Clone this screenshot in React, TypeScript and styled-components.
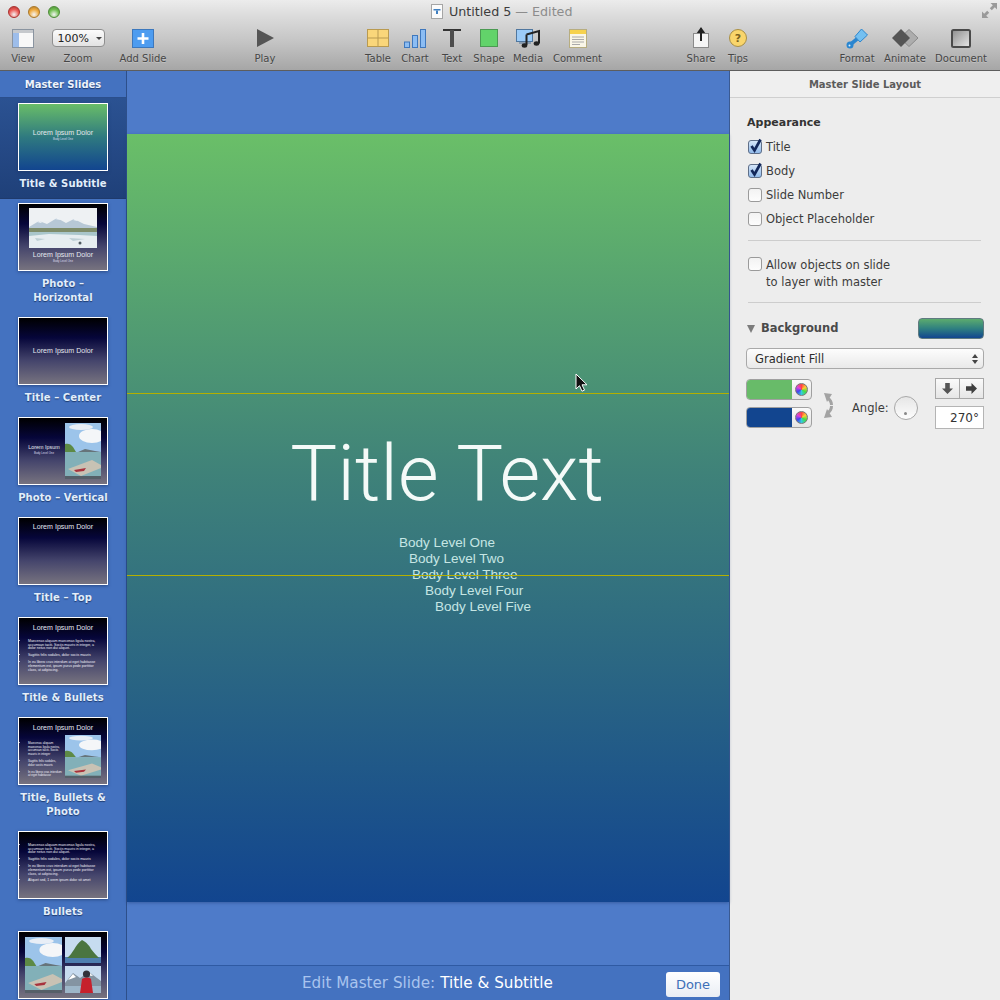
import React from "react";
import styled, { createGlobalStyle } from "styled-components";

const Global = createGlobalStyle`
  html, body { margin: 0; padding: 0; background: #ededed; }
  * { box-sizing: border-box; }
`;

const Root = styled.div`
  position: relative;
  width: 1000px;
  height: 1000px;
  overflow: hidden;
  display: flex;
  flex-direction: column;
  font-family: "DejaVu Sans", "Liberation Sans", sans-serif;
`;

/* ---------- toolbar ---------- */
const Toolbar = styled.header`
  position: relative;
  height: 71px;
  flex: none;
  background: linear-gradient(#ececec 0%, #dcdcdc 22%, #c4c4c4 60%, #a6a6a6 100%);
  border-bottom: 1px solid #5d5d5d;
`;
const TitleBar = styled.div`
  height: 23px;
  display: flex;
  align-items: center;
  position: relative;
`;
const Lights = styled.div`
  display: flex;
  gap: 8px;
  padding-left: 8px;
  align-items: center;
`;
const Light = styled.span<{ $c: string; $d: string }>`
  width: 12px;
  height: 12px;
  border-radius: 50%;
  border: 1px solid ${(p) => p.$d};
  background: radial-gradient(circle at 50% 75%, #ffffffb0 0%, ${(p) => p.$c} 55%, ${(p) => p.$d} 100%);
`;
const WinTitle = styled.div`
  position: absolute;
  left: 431px;
  top: 3px;
  display: flex;
  align-items: center;
  gap: 6px;
  font-size: 12.7px;
  color: #3c3c3c;
  line-height: 17px;
`;
const Edited = styled.span`
  color: #8c8c8c;
`;
const FullScreen = styled.div`
  position: absolute;
  right: 3px;
  top: 3px;
  display: flex;
`;
const ToolRow = styled.div`
  display: flex;
  align-items: flex-start;
  height: 47px;
`;
const ToolGroup = styled.div<{ $ml?: number }>`
  display: flex;
  margin-left: ${(p) => p.$ml ?? 0}px;
`;
const Tool = styled.div<{ $w: number }>`
  width: ${(p) => p.$w}px;
  display: flex;
  flex-direction: column;
  align-items: center;
`;
const IconSlot = styled.div<{ $pt?: number }>`
  height: 26px;
  padding-top: ${(p) => p.$pt ?? 6}px;
  display: flex;
  align-items: flex-start;
  justify-content: center;
`;
const ToolLabel = styled.div`
  font-size: 10px;
  line-height: 13px;
  margin-top: 3px;
  color: #464646;
  white-space: nowrap;
  text-shadow: 0 1px 0 #ffffff40;
`;
const ZoomButton = styled.div`
  width: 53px;
  height: 18px;
  border: 1px solid #8f8f8f;
  border-radius: 4px;
  background: linear-gradient(#fbfbfb, #e2e2e2);
  display: flex;
  align-items: center;
  padding-left: 5px;
  gap: 7px;
  font-size: 11px;
  color: #222;
`;
const Caret = styled.span`
  width: 0;
  height: 0;
  border-left: 3px solid transparent;
  border-right: 3px solid transparent;
  border-top: 3px solid #444;
`;

/* ---------- main ---------- */
const Main = styled.div`
  flex: 1;
  display: flex;
  min-height: 0;
`;

const Sidebar = styled.aside`
  width: 127px;
  flex: none;
  background: #4472c0;
  border-right: 1px solid #2d4f8a;
  display: flex;
  flex-direction: column;
  overflow: hidden;
`;
const SideHead = styled.div`
  height: 27px;
  flex: none;
  display: flex;
  align-items: center;
  justify-content: center;
  font-size: 10px;
  font-weight: 700;
  color: #eef4fc;
  border-bottom: 1px solid #2b4f8c;
  text-shadow: 0 1px 1px #1d3a6e;
`;
const SlideItem = styled.div<{ $sel?: boolean }>`
  flex: none;
  padding: 5px 0 7px;
  display: flex;
  flex-direction: column;
  align-items: center;
  gap: 6px;
  background: ${(p) => (p.$sel ? "linear-gradient(#2b5292, #1f4079)" : "transparent")};
  border-bottom: ${(p) => (p.$sel ? "1px solid #1f3a6c" : "0")};
  margin-bottom: ${(p) => (p.$sel ? "-1px" : "0")};
`;
const Thumb = styled.div<{ $green?: boolean }>`
  position: relative;
  width: 90px;
  height: 68px;
  flex: none;
  border: 1px solid #fff;
  box-shadow: 0 1px 3px #17305f90;
  overflow: hidden;
  display: flex;
  flex-direction: column;
  background: ${(p) =>
    p.$green
      ? "linear-gradient(#69bd68, #2f7a80 50%, #12458f)"
      : "linear-gradient(#000 0%, #06063a 30%, #45456c 65%, #77737f 100%)"};
`;
const MiniTitle = styled.div<{ $mt: number; $w?: number; $size?: number }>`
  margin-top: ${(p) => p.$mt}px;
  width: ${(p) => p.$w ?? 88}px;
  text-align: center;
  font-family: "Liberation Sans", sans-serif;
  font-size: ${(p) => p.$size ?? 7.1}px;
  line-height: 8px;
  color: #e4e8ee;
  white-space: nowrap;
`;
const MiniSub = styled.div<{ $w?: number }>`
  width: ${(p) => p.$w ?? 88}px;
  text-align: center;
  font-family: "Liberation Sans", sans-serif;
  font-size: 2.8px;
  line-height: 5px;
  color: #dde;
  white-space: nowrap;
`;
const MiniList = styled.ul<{ $mt: number; $w: number; $size?: number }>`
  margin: ${(p) => p.$mt}px 0 0 6px;
  padding: 0 0 0 3px;
  width: ${(p) => p.$w}px;
  font-family: "Liberation Sans", sans-serif;
  font-size: ${(p) => p.$size ?? 3.5}px;
  line-height: 3.7px;
  color: #eeeef6;
  li {
    margin-bottom: 3.2px;
  }
`;
const PhotoBox = styled.div<{ $x: number; $y: number; $w: number; $h: number }>`
  position: absolute;
  left: ${(p) => p.$x}px;
  top: ${(p) => p.$y}px;
  width: ${(p) => p.$w}px;
  height: ${(p) => p.$h}px;
  display: flex;
  svg {
    width: 100%;
    height: 100%;
    filter: blur(0.35px);
  }
`;
const SlideName = styled.div`
  width: 100px;
  text-align: center;
  font-size: 10px;
  font-weight: 700;
  line-height: 14px;
  color: #e2eefb;
  letter-spacing: 0.1px;
  text-shadow: 0 1px 1px #1d3a6e;
`;

const Canvas = styled.main`
  position: relative;
  width: 602px;
  flex: none;
  background: #4e7bc9;
  display: flex;
  flex-direction: column;
`;
const CanvasTop = styled.div`
  height: 63px;
  flex: none;
`;
const Slide = styled.div`
  height: 768px;
  flex: none;
  position: relative;
  display: flex;
  flex-direction: column;
  background: linear-gradient(#6abf68 0%, #3f8279 44%, #12458f 100%);
  box-shadow: 0 1px 3px #1d3a6e70;
`;
const Guide = styled.div<{ $y: number }>`
  position: absolute;
  left: 0;
  right: 0;
  top: ${(p) => p.$y}px;
  height: 1px;
  background: #b4b000;
`;
const TitleText = styled.div`
  margin-top: 293px;
  height: 92px;
  padding-left: 38px;
  text-align: center;
  font-family: Roboto, "Liberation Sans", sans-serif;
  font-weight: 300;
  font-size: 78.7px;
  line-height: 92px;
  color: #f4faf8;
`;
const BodyBlock = styled.div`
  margin-top: 16px;
  display: flex;
  flex-direction: column;
`;
const BodyLine = styled.div<{ $x: number }>`
  padding-left: ${(p) => p.$x}px;
  font-family: "Liberation Sans", sans-serif;
  font-size: 13.5px;
  line-height: 16px;
  color: #c6e6e4;
`;
const CanvasGap = styled.div`
  flex: 1;
`;
const EditBar = styled.div`
  height: 35px;
  flex: none;
  background: #4472c0;
  border-top: 1px solid #2f5aa3;
  display: flex;
  align-items: center;
  padding: 0 9px 0 175px;
  font-size: 15.2px;
  color: #a9c4ee;
`;
const EditName = styled.span`
  color: #fff;
  margin-left: 5px;
`;
const DoneButton = styled.div`
  margin-left: auto;
  width: 54px;
  height: 25px;
  margin-top: 2px;
  background: linear-gradient(#fff, #e9edf4);
  border-radius: 3px;
  display: flex;
  align-items: center;
  justify-content: center;
  font-size: 13px;
  color: #3e70b8;
`;

/* ---------- inspector ---------- */
const Panel = styled.aside`
  flex: 1;
  background: #ededed;
  border-left: 1px solid #3a5a92;
  display: flex;
  flex-direction: column;
  font-size: 11.5px;
  color: #3c3c3c;
`;
const PanelHead = styled.div`
  height: 27px;
  flex: none;
  display: flex;
  align-items: center;
  justify-content: center;
  font-size: 10px;
  font-weight: 700;
  color: #5b5b5b;
  background: #efefef;
  border-bottom: 1px solid #cfcfcf;
`;
const PanelBody = styled.div`
  padding: 17px 16px 0 17px;
  display: flex;
  flex-direction: column;
`;
const SectionTitle = styled.div`
  font-size: 11px;
  font-weight: 700;
  line-height: 16px;
  color: #333;
  margin-bottom: 4px;
`;
const CheckRow = styled.div`
  height: 24px;
  display: flex;
  align-items: center;
  gap: 2px;
  padding-left: 1px;
  white-space: nowrap;
`;
const CheckWrap = styled.div`
  min-height: 17px;
  display: flex;
  align-items: flex-start;
  gap: 2px;
  padding-left: 1px;
  line-height: 17px;
`;
const Rule = styled.div<{ $mt: number; $mb: number }>`
  height: 1px;
  background: #cdcdcd;
  margin: ${(p) => p.$mt}px 3px ${(p) => p.$mb}px 1px;
`;
const BgHead = styled.div`
  display: flex;
  align-items: center;
  height: 21px;
  font-weight: 700;
  color: #4a4a4a;
  font-size: 11.5px;
`;
const BgLabel = styled.span`
  margin-bottom: 2px;
`;
const Disclosure = styled.span`
  width: 0;
  height: 0;
  border-left: 4.5px solid transparent;
  border-right: 4.5px solid transparent;
  border-top: 8px solid #7c7c7c;
  margin-right: 6px;
`;
const GradSwatch = styled.div`
  margin-left: auto;
  width: 66px;
  height: 21px;
  border-radius: 4px;
  border: 1px solid #5f7a80;
  background: linear-gradient(#5cab6e, #2f8080 50%, #12458f);
`;
const SelectBox = styled.div`
  height: 21px;
  margin: 9px 0 0 -1px;
  border: 1px solid #a9a9a9;
  border-radius: 4px;
  background: linear-gradient(#fdfdfd, #e9e9e9);
  display: flex;
  align-items: center;
  justify-content: space-between;
  padding: 0 5px 0 8px;
  font-size: 11.5px;
  color: #2c2c2c;
`;
const Steppers = styled.div`
  display: flex;
  flex-direction: column;
  gap: 2px;
`;
const FillGrid = styled.div`
  display: flex;
  margin: 10px 0 0 -1px;
`;
const Wells = styled.div`
  display: flex;
  flex-direction: column;
  gap: 7px;
`;
const Well = styled.div`
  width: 66px;
  height: 21px;
  border: 1px solid #a0a0a0;
  border-radius: 4px;
  overflow: hidden;
  display: flex;
  background: linear-gradient(#fafafa, #e4e4e4);
`;
const WellColor = styled.div<{ $c: string }>`
  width: 45px;
  background: ${(p) => p.$c};
`;
const Wheel = styled.div`
  width: 13px;
  height: 13px;
  margin: 3px 0 0 3px;
  border-radius: 50%;
  background: conic-gradient(#f44, #fc3, #4d4, #3cd, #44e, #d4d, #f44);
  border: 1px solid #777;
`;
const SwapSlot = styled.div`
  width: 40px;
  display: flex;
  justify-content: center;
  padding-top: 14px;
  padding-right: 6px;
`;
const AngleLabel = styled.div`
  display: flex;
  align-items: center;
  height: 24px;
  margin-top: 17px;
  gap: 5px;
  font-size: 11.5px;
  color: #3c3c3c;
`;
const Dial = styled.div`
  width: 24px;
  height: 24px;
  border-radius: 50%;
  border: 1px solid #a8a8a8;
  background: linear-gradient(#e6e6e6, #fdfdfd);
  display: flex;
  align-items: flex-end;
  justify-content: center;
  padding-bottom: 4px;
`;
const DialDot = styled.span`
  width: 3px;
  height: 3px;
  border-radius: 50%;
  background: #888;
`;
const AngleColumn = styled.div`
  margin-left: auto;
  display: flex;
  flex-direction: column;
  gap: 7px;
`;
const Segments = styled.div`
  width: 49px;
  height: 21px;
  display: flex;
  border: 1px solid #a8a8a8;
  background: linear-gradient(#fafafa, #e6e6e6);
  margin-top: -1px;
`;
const Segment = styled.div<{ $line?: boolean }>`
  flex: 1;
  display: flex;
  align-items: center;
  justify-content: center;
  border-left: ${(p) => (p.$line ? "1px solid #a8a8a8" : "0")};
`;
const AngleInput = styled.div`
  width: 49px;
  height: 23px;
  border: 1px solid #b4b4b4;
  background: #fff;
  display: flex;
  align-items: center;
  justify-content: flex-end;
  padding-right: 4px;
  font-size: 12px;
  color: #333;
`;
const CursorLayer = styled.div`
  position: absolute;
  left: 575px;
  top: 373px;
  display: flex;
`;

/* ---------- drawings ---------- */
const ViewIcon = () => (
  <svg width="22" height="19" viewBox="0 0 22 19">
    <rect x=".5" y=".5" width="21" height="18" fill="#f8f8f8" stroke="#8a94a0" />
    <rect x="1" y="1" width="20" height="3" fill="#c6c9cd" />
    <rect x="1" y="4" width="6" height="14" fill="#9dbdea" />
  </svg>
);
const AddIcon = () => (
  <svg width="22" height="19" viewBox="0 0 22 19">
    <rect x=".5" y=".5" width="21" height="18" fill="#4d9cf0" stroke="#3c78bd" />
    <path d="M11 4v11M5.500 9.500h11" stroke="#fff" strokeWidth="2.600" />
  </svg>
);
const PlayIcon = () => (
  <svg width="17" height="18" viewBox="0 0 17 18">
    <path d="M0 0 17 9 0 18z" fill="#555" />
  </svg>
);
const TableIcon = () => (
  <svg width="22" height="18" viewBox="0 0 22 18">
    <rect x=".5" y=".5" width="21" height="17" fill="#fad67a" stroke="#b99a50" />
    <path d="M11 1v16M1 9h20" stroke="#b99a50" />
  </svg>
);
const ChartIcon = () => (
  <svg width="23" height="19" viewBox="0 0 23 19">
    <g fill="#8cbdf3" stroke="#3f78bd">
      <rect x=".5" y="13" width="5" height="5.500" />
      <rect x="8.500" y="6.500" width="5" height="12" />
      <rect x="16.500" y=".5" width="5" height="18" />
    </g>
  </svg>
);
const TextIcon = () => (
  <svg width="18" height="18" viewBox="0 0 18 18">
    <path d="M0 1h18" stroke="#333" strokeWidth="2" />
    <path d="M9 1v17" stroke="#4d4d4d" strokeWidth="4" />
  </svg>
);
const ShapeIcon = () => (
  <svg width="18" height="18" viewBox="0 0 18 18">
    <rect x=".5" y=".5" width="17" height="17" fill="#62d36a" stroke="#4b9a52" />
  </svg>
);
const MediaIcon = () => (
  <svg width="24" height="19" viewBox="0 0 24 19">
    <rect x=".5" y=".5" width="16" height="12" fill="#9ccbf7" stroke="#50779f" />
    <path d="M3 14h12" stroke="#50779f" />
    <path d="M10.500 5.500 23 2v12.500M10.500 5.500V16" stroke="#222" strokeWidth="2" fill="none" />
    <ellipse cx="8.500" cy="16.500" rx="2.800" ry="2.200" fill="#222" />
    <ellipse cx="20.500" cy="14.500" rx="2.800" ry="2.200" fill="#222" />
  </svg>
);
const CommentIcon = () => (
  <svg width="18" height="19" viewBox="0 0 18 19">
    <rect x=".5" y=".5" width="17" height="18" fill="#f9f6e8" stroke="#b7ad80" />
    <rect x="1" y="1" width="16" height="4" fill="#f6d24e" />
    <path d="M3 8h12M3 10.500h12M3 13h12M3 15.500h8" stroke="#aaa" />
  </svg>
);
const ShareIcon = () => (
  <svg width="16" height="21" viewBox="0 0 16 21">
    <rect x=".5" y="6.500" width="15" height="14" fill="#f5f5f5" stroke="#8a8a8a" />
    <path d="M8 14V1.500" stroke="#222" strokeWidth="2" />
    <path d="M3.800 6 8 0l4.200 6z" fill="#222" />
  </svg>
);
const TipsIcon = () => (
  <svg width="18" height="18" viewBox="0 0 18 18">
    <circle cx="9" cy="9" r="8.500" fill="#f9d56b" stroke="#a98f45" />
    <text x="9" y="13" textAnchor="middle" fontSize="11" fontWeight="700" fontFamily="DejaVu Sans" fill="#7a6220">?</text>
  </svg>
);
const FormatIcon = () => (
  <svg width="22" height="21" viewBox="0 0 22 21">
    <path d="M9 8.500 15.500 1 21.500 7 14 14z" fill="#74c0f1" stroke="#2f86cc" />
    <path d="M11 11 5 16" stroke="#2a86d0" strokeWidth="3.600" />
    <circle cx="4" cy="17" r="3.500" fill="#2a86d0" />
    <circle cx="3.500" cy="17.500" r="1" fill="#dcefff" />
  </svg>
);
const AnimateIcon = () => (
  <svg width="28" height="18" viewBox="0 0 28 18">
    <path d="M18 .5 27 9l-9 8.500L9 9z" fill="#adadad" stroke="#8a8a8a" />
    <path d="M10 0 19 9l-9 9L1 9z" fill="#555" />
  </svg>
);
const DocumentIcon = () => (
  <svg width="20" height="19" viewBox="0 0 20 19">
    <defs>
      <linearGradient id="docg" x1="0" y1="0" x2="1" y2="1">
        <stop offset="0" stopColor="#8d8d8d" />
        <stop offset="1" stopColor="#e8e8e8" />
      </linearGradient>
    </defs>
    <rect x="1" y="1" width="18" height="17" rx="1.500" fill="url(#docg)" stroke="#4a4a4a" strokeWidth="2" />
  </svg>
);
const FullIcon = () => (
  <svg width="15" height="15" viewBox="0 0 15 15" fill="#9a9a9a">
    <path d="M15 0v6.500L12.800 4.300 9.800 7.300 7.800 5.300l3-3L8.500 0z" />
    <path d="M0 15V8.500l2.200 2.200 3-3 2 2-3 3L6.500 15z" />
  </svg>
);
const DocBadge = () => (
  <svg width="12" height="15" viewBox="0 0 12 15">
    <rect x=".5" y=".5" width="11" height="14" fill="#fbfbfb" stroke="#a5a5a5" />
    <path d="M2.500 5h7v1.500h-7z" fill="#3f7fc0" />
    <path d="M5 6.500h2V10H5z" fill="#3f7fc0" />
  </svg>
);
const CheckBox = ({ on }: { on?: boolean }) => (
  <svg width="16" height="18" viewBox="0 0 16 18" style={{ flex: "none", marginTop: -3 }}>
    <defs>
      <linearGradient id="chkOn" x1="0" y1="0" x2="0" y2="1">
        <stop offset="0" stopColor="#d8e8fa" />
        <stop offset="1" stopColor="#8fb9ea" />
      </linearGradient>
      <linearGradient id="chkOff" x1="0" y1="0" x2="0" y2="1">
        <stop offset="0" stopColor="#f2f2f2" />
        <stop offset="1" stopColor="#fdfdfd" />
      </linearGradient>
    </defs>
    <rect x=".5" y="3.500" width="13" height="13" rx="2.500" fill={on ? "url(#chkOn)" : "url(#chkOff)"} stroke={on ? "#5f6f88" : "#9a9a9a"} />
    {on && <path d="M3.500 9 6.500 13.500 12.500 2.500" fill="none" stroke="#12275a" strokeWidth="2.700" />}
  </svg>
);
const SwapIcon = () => (
  <svg width="10" height="25" viewBox="0 0 10 25" fill="#a3a3a3">
    <path d="M0 0 8 1 3 9z" />
    <path d="M4 3.500c3.500 2 5 5 5 8.500H6c0-2.500-1.200-4.500-3.500-6z" />
    <path d="M0 25 8 24 3 16z" />
    <path d="M4 21.500c3.500-2 5-5 5-8.500H6c0 2.500-1.200 4.500-3.500 6z" />
  </svg>
);
const DownArrow = () => (
  <svg width="11" height="11" viewBox="0 0 12 12">
    <path d="M3.500 0h5v6H12L6 12 0 6h3.500z" fill="#555" />
  </svg>
);
const RightArrow = () => (
  <svg width="11" height="11" viewBox="0 0 12 12">
    <path d="M0 3.500v5h6V12l6-6-6-6v3.500z" fill="#3f3f3f" />
  </svg>
);
const Cursor = () => (
  <svg width="13" height="19" viewBox="0 0 13 19">
    <path d="M1 1v15l3.500-3.300 2.500 5.500 2.500-1.100L7 11.800h5z" fill="#111" stroke="#fff" strokeWidth="1" />
  </svg>
);

const LakeWide = () => (
  <svg viewBox="0 0 68 40" preserveAspectRatio="none">
    <rect width="68" height="40" fill="#eef1f3" />
    <path d="M0 19 10 13l8 3 10-6 9 5 8-4 10 5 13 3v3H0z" fill="#b7c8d6" />
    <path d="M8 14l3-1 2 2zM26 11l3-1 3 2zM44 12l2-1 3 2z" fill="#f6f8fa" />
    <rect y="20" width="68" height="4" fill="#7e8c6a" />
    <rect y="24" width="68" height="6" fill="#a9c6cb" />
    <path d="M0 28 20 26l30 1 18 1v12H0z" fill="#e6edf0" />
    <path d="M6 30l10 1-8 2zM40 30l16 1-12 2z" fill="#bfd0d6" />
    <circle cx="51" cy="35" r="1.500" fill="#4f5a60" />
  </svg>
);
const LakeTall = () => (
  <svg viewBox="0 0 36 56" preserveAspectRatio="none">
    <rect width="36" height="56" fill="#9cc4ea" />
    <ellipse cx="27" cy="13" rx="13" ry="7" fill="#f4f6f8" />
    <ellipse cx="16" cy="4" rx="12" ry="3" fill="#e8eef6" />
    <path d="M0 21c3-1 6 0 8 3l3 5H0z" fill="#5d8a45" />
    <path d="M13 29l7-3 10 2 6 1z" fill="#66747a" />
    <rect y="29" width="36" height="27" fill="#82b0b8" />
    <path d="M3 46l24-9 9 5v3L16 53z" fill="#c8c2b4" />
    <path d="M9 47l12-2-2 3-8 1z" fill="#a8323c" />
    <rect y="53" width="36" height="3" fill="#555f68" />
  </svg>
);
const IslandPhoto = () => (
  <svg viewBox="0 0 36 26" preserveAspectRatio="none">
    <rect width="36" height="26" fill="#c6dcf0" />
    <rect y="20" width="36" height="6" fill="#4e7fb0" />
    <path d="M2 21C8 17 10 8 17 3c5 3 7 5 9 9 3 4 6 7 8 9z" fill="#4a7540" />
  </svg>
);
const RedCoatPhoto = () => (
  <svg viewBox="0 0 36 27" preserveAspectRatio="none">
    <rect width="36" height="27" fill="#c7dbef" />
    <path d="M0 17 8 7l7 5 9-6 12 9v12H0z" fill="#8494a2" />
    <path d="M3 14l5-6 3 3zM19 9l5-3 4 4z" fill="#fff" />
    <rect y="20" width="36" height="7" fill="#9db6c8" />
    <path d="M15 27l2-14c3-2 7-2 9 0l2 14z" fill="#c6202c" />
    <circle cx="21.500" cy="8" r="3.600" fill="#33323a" />
  </svg>
);

const B1 = "Maecenas aliquam maecenas ligula nostra, accumsan taciti. Sociis mauris in integer, a dolor netus non dui aliquet.";
const B2 = "Sagittis felis sodales, dolor sociis mauris";
const B3 = "In eu libero cras interdum at eget habitasse elementum est, ipsum purus pede porttitor class, ut adipiscing.";
const B4 = "Aliquet sed, 1 orem ipsum dolor sit amet";
const L = "Lorem Ipsum Dolor";

export default function App() {
  return (
    <Root>
      <Global />
      <Toolbar>
        <TitleBar>
          <Lights>
            <Light $c="#ec5a55" $d="#a9302e" />
            <Light $c="#efa93c" $d="#a9772a" />
            <Light $c="#71bf52" $d="#4c8a38" />
          </Lights>
          <WinTitle>
            <DocBadge />
            <span>
              Untitled 5 <Edited>— Edited</Edited>
            </span>
          </WinTitle>
          <FullScreen>
            <FullIcon />
          </FullScreen>
        </TitleBar>
        <ToolRow>
          <ToolGroup>
            <Tool $w={46}>
              <IconSlot><ViewIcon /></IconSlot>
              <ToolLabel>View</ToolLabel>
            </Tool>
            <Tool $w={64}>
              <IconSlot>
                <ZoomButton>100%<Caret /></ZoomButton>
              </IconSlot>
              <ToolLabel>Zoom</ToolLabel>
            </Tool>
            <Tool $w={66}>
              <IconSlot><AddIcon /></IconSlot>
              <ToolLabel>Add Slide</ToolLabel>
            </Tool>
          </ToolGroup>
          <ToolGroup $ml={69}>
            <Tool $w={40}>
              <IconSlot><PlayIcon /></IconSlot>
              <ToolLabel>Play</ToolLabel>
            </Tool>
          </ToolGroup>
          <ToolGroup $ml={75}>
            <Tool $w={36}><IconSlot><TableIcon /></IconSlot><ToolLabel>Table</ToolLabel></Tool>
            <Tool $w={38}><IconSlot><ChartIcon /></IconSlot><ToolLabel>Chart</ToolLabel></Tool>
            <Tool $w={36}><IconSlot><TextIcon /></IconSlot><ToolLabel>Text</ToolLabel></Tool>
            <Tool $w={38}><IconSlot><ShapeIcon /></IconSlot><ToolLabel>Shape</ToolLabel></Tool>
            <Tool $w={40}><IconSlot><MediaIcon /></IconSlot><ToolLabel>Media</ToolLabel></Tool>
            <Tool $w={59}><IconSlot><CommentIcon /></IconSlot><ToolLabel>Comment</ToolLabel></Tool>
          </ToolGroup>
          <ToolGroup $ml={76}>
            <Tool $w={36}><IconSlot $pt={4}><ShareIcon /></IconSlot><ToolLabel>Share</ToolLabel></Tool>
            <Tool $w={38}><IconSlot><TipsIcon /></IconSlot><ToolLabel>Tips</ToolLabel></Tool>
          </ToolGroup>
          <ToolGroup $ml={78}>
            <Tool $w={44}><IconSlot $pt={5}><FormatIcon /></IconSlot><ToolLabel>Format</ToolLabel></Tool>
            <Tool $w={52}><IconSlot><AnimateIcon /></IconSlot><ToolLabel>Animate</ToolLabel></Tool>
            <Tool $w={60}><IconSlot><DocumentIcon /></IconSlot><ToolLabel>Document</ToolLabel></Tool>
          </ToolGroup>
        </ToolRow>
      </Toolbar>

      <Main>
        <Sidebar>
          <SideHead>Master Slides</SideHead>
          <SlideItem $sel>
            <Thumb $green>
              <MiniTitle $mt={25}>{L}</MiniTitle>
              <MiniSub>Body Level One</MiniSub>
            </Thumb>
            <SlideName>Title &amp; Subtitle</SlideName>
          </SlideItem>
          <SlideItem>
            <Thumb>
              <PhotoBox $x={10} $y={4} $w={68} $h={40}><LakeWide /></PhotoBox>
              <MiniTitle $mt={47}>{L}</MiniTitle>
              <MiniSub>Body Level One</MiniSub>
            </Thumb>
            <SlideName>Photo –<br />Horizontal</SlideName>
          </SlideItem>
          <SlideItem>
            <Thumb>
              <MiniTitle $mt={29}>{L}</MiniTitle>
            </Thumb>
            <SlideName>Title – Center</SlideName>
          </SlideItem>
          <SlideItem>
            <Thumb>
              <PhotoBox $x={46} $y={5} $w={36} $h={56}><LakeTall /></PhotoBox>
              <MiniTitle $mt={25} $w={50} $size={5.4}>Lorem Ipsum</MiniTitle>
              <MiniSub $w={50}>Body Level One</MiniSub>
            </Thumb>
            <SlideName>Photo – Vertical</SlideName>
          </SlideItem>
          <SlideItem>
            <Thumb>
              <MiniTitle $mt={5}>{L}</MiniTitle>
            </Thumb>
            <SlideName>Title – Top</SlideName>
          </SlideItem>
          <SlideItem>
            <Thumb>
              <MiniTitle $mt={6}>{L}</MiniTitle>
              <MiniList $mt={8} $w={76}>
                <li>{B1}</li>
                <li>{B2}</li>
                <li>{B3}</li>
              </MiniList>
            </Thumb>
            <SlideName>Title &amp; Bullets</SlideName>
          </SlideItem>
          <SlideItem>
            <Thumb>
              <PhotoBox $x={46} $y={17} $w={36} $h={43}><LakeTall /></PhotoBox>
              <MiniTitle $mt={6}>{L}</MiniTitle>
              <MiniList $mt={10} $w={38} $size={3}>
                <li>Maecenas aliquam maecenas ligula nostra, accumsan taciti. Sociis mauris in integer</li>
                <li>{B2}</li>
                <li>In eu libero cras interdum at eget habitasse</li>
              </MiniList>
            </Thumb>
            <SlideName>Title, Bullets &amp;<br />Photo</SlideName>
          </SlideItem>
          <SlideItem>
            <Thumb>
              <MiniList $mt={12} $w={76}>
                <li>{B1}</li>
                <li>{B2}</li>
                <li>{B3}</li>
                <li>{B4}</li>
              </MiniList>
            </Thumb>
            <SlideName>Bullets</SlideName>
          </SlideItem>
          <SlideItem>
            <Thumb>
              <PhotoBox $x={6} $y={5} $w={37} $h={56}><LakeTall /></PhotoBox>
              <PhotoBox $x={46} $y={5} $w={36} $h={26}><IslandPhoto /></PhotoBox>
              <PhotoBox $x={46} $y={34} $w={36} $h={27}><RedCoatPhoto /></PhotoBox>
            </Thumb>
          </SlideItem>
        </Sidebar>

        <Canvas>
          <CanvasTop />
          <Slide>
            <TitleText>Title Text</TitleText>
            <BodyBlock>
              <BodyLine $x={272}>Body Level One</BodyLine>
              <BodyLine $x={282}>Body Level Two</BodyLine>
              <BodyLine $x={285}>Body Level Three</BodyLine>
              <BodyLine $x={298}>Body Level Four</BodyLine>
              <BodyLine $x={308}>Body Level Five</BodyLine>
            </BodyBlock>
            <Guide $y={259} />
            <Guide $y={441} />
          </Slide>
          <CanvasGap />
          <EditBar>
            Edit Master Slide:<EditName>Title &amp; Subtitle</EditName>
            <DoneButton>Done</DoneButton>
          </EditBar>
        </Canvas>

        <Panel>
          <PanelHead>Master Slide Layout</PanelHead>
          <PanelBody>
            <SectionTitle>Appearance</SectionTitle>
            <CheckRow><CheckBox on />Title</CheckRow>
            <CheckRow><CheckBox on />Body</CheckRow>
            <CheckRow><CheckBox />Slide Number</CheckRow>
            <CheckRow><CheckBox />Object Placeholder</CheckRow>
            <Rule $mt={9} $mb={16} />
            <CheckWrap>
              <CheckBox />
              <div>Allow objects on slide<br />to layer with master</div>
            </CheckWrap>
            <Rule $mt={11} $mb={15} />
            <BgHead>
              <Disclosure />
              <BgLabel>Background</BgLabel>
              <GradSwatch />
            </BgHead>
            <SelectBox>
              Gradient Fill
              <Steppers>
                <svg width="6" height="4" viewBox="0 0 6 4"><path d="M3 0l3 4H0z" fill="#444" /></svg>
                <svg width="6" height="4" viewBox="0 0 6 4"><path d="M3 4l3-4H0z" fill="#444" /></svg>
              </Steppers>
            </SelectBox>
            <FillGrid>
              <Wells>
                <Well><WellColor $c="#68bb69" /><Wheel /></Well>
                <Well><WellColor $c="#12458f" /><Wheel /></Well>
              </Wells>
              <SwapSlot><SwapIcon /></SwapSlot>
              <AngleLabel>
                Angle:
                <Dial><DialDot /></Dial>
              </AngleLabel>
              <AngleColumn>
                <Segments>
                  <Segment><DownArrow /></Segment>
                  <Segment $line><RightArrow /></Segment>
                </Segments>
                <AngleInput>270°</AngleInput>
              </AngleColumn>
            </FillGrid>
          </PanelBody>
        </Panel>
      </Main>
      <CursorLayer><Cursor /></CursorLayer>
    </Root>
  );
}
